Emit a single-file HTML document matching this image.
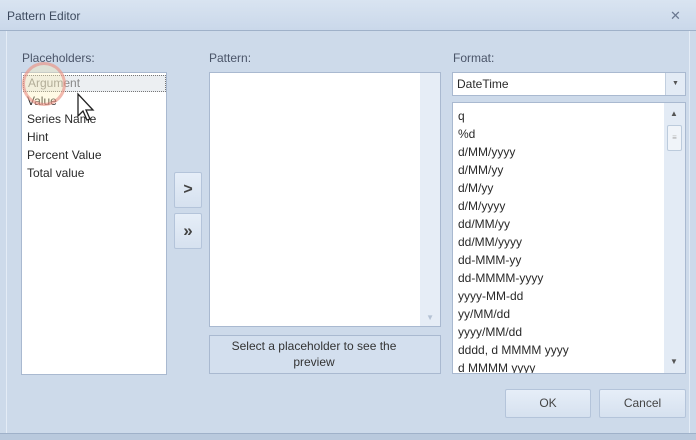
<!DOCTYPE html>
<html><head><style>
*{margin:0;padding:0;box-sizing:border-box}
body{width:696px;height:440px;background:#cddaea;font-family:"Liberation Sans",sans-serif;font-size:12px;color:#2a2a2a;position:relative;overflow:hidden}
.a{position:absolute}
.box{position:absolute;background:#fff;border:1px solid #a9b9d0}
.lbl{position:absolute;color:#4a5468;font-size:12px}
.it{height:18px;line-height:18px;padding-left:5px;white-space:nowrap}
.btn{position:absolute;background:linear-gradient(#e6eef8,#d6e1ef);border:1px solid #b4c4da;border-radius:2px;text-align:center;color:#444}
</style></head><body>
<div class="a" style="left:0;top:0;width:696px;height:31px;background:linear-gradient(#d9e4f1,#cad8ea);border-bottom:1px solid #9fb1c9"></div>
<div class="a" style="left:7px;top:9px;color:#3d4a5e;font-size:12px">Pattern Editor</div>
<div class="a" style="left:670px;top:8px;color:#6a7890;font-size:13px">✕</div>
<div class="a" style="left:6px;top:31px;width:684px;height:404px;border:1px solid #e4ecf6;border-top:none"></div>
<div class="a" style="left:0;top:433px;width:696px;height:7px;background:#b9c9dd;border-top:1px solid #9fb1c9"></div>

<div class="lbl" style="left:22px;top:51px">Placeholders:</div>
<div class="box" style="left:21px;top:72px;width:146px;height:303px;padding-top:2px">
<div class="it" style="background:#eceff2;border:1px dotted #777;color:#888;margin:0 0 0 1px;height:17px;line-height:15px;padding-left:4px">Argument</div>
<div class="it">Value</div><div class="it">Series Name</div><div class="it">Hint</div><div class="it">Percent Value</div><div class="it">Total value</div>
</div>
<div class="a" style="left:22px;top:62px;width:44px;height:44px;border-radius:50%;border:3px solid rgba(230,120,120,.5);background:rgba(255,240,180,.35)"></div>
<svg class="a" style="left:76px;top:92px" width="24" height="34"><path d="M2 2 L2 24 L7 19 L11 28 L14 27 L10 18 L17 18 Z" fill="#fff" stroke="#222" stroke-width="1.3"/></svg>

<div class="btn" style="left:174px;top:172px;width:28px;height:36px;line-height:34px;font-size:16px;font-weight:bold">&gt;</div>
<div class="btn" style="left:174px;top:213px;width:28px;height:36px;line-height:34px;font-size:17px;font-weight:bold">»</div>

<div class="lbl" style="left:209px;top:51px">Pattern:</div>
<div class="box" style="left:209px;top:72px;width:232px;height:255px">
<div class="a" style="right:0;top:0;width:20px;height:253px;background:#e6edf6"></div>
<div class="a" style="right:6px;top:240px;color:#b5c2d4;font-size:8px">▼</div>
</div>
<div class="a" style="left:209px;top:335px;width:232px;height:39px;border:1px solid #a9b9d0;background:#d3dfee;text-align:center;line-height:16px;padding:2px 22px 0 0;color:#333">Select a placeholder to see the preview</div>

<div class="lbl" style="left:453px;top:51px">Format:</div>
<div class="box" style="left:452px;top:72px;width:234px;height:24px;line-height:22px;padding-left:4px">DateTime
<div class="a" style="right:0;top:0;width:20px;height:22px;background:#e3ebf5;border-left:1px solid #c2cfdf;text-align:center;font-size:7px;color:#555">▼</div></div>
<div class="box" style="left:452px;top:102px;width:234px;height:272px;padding-top:4px;overflow:hidden">
<div class="it">q</div><div class="it">%d</div><div class="it">d/MM/yyyy</div><div class="it">d/MM/yy</div><div class="it">d/M/yy</div><div class="it">d/M/yyyy</div><div class="it">dd/MM/yy</div><div class="it">dd/MM/yyyy</div><div class="it">dd-MMM-yy</div><div class="it">dd-MMMM-yyyy</div><div class="it">yyyy-MM-dd</div><div class="it">yy/MM/dd</div><div class="it">yyyy/MM/dd</div><div class="it">dddd, d MMMM yyyy</div><div class="it">d MMMM yyyy</div>
<div class="a" style="right:0;top:0;width:21px;height:270px;background:#e3ebf5">
<div class="a" style="left:6px;top:6px;font-size:8px;color:#555">▲</div>
<div class="a" style="left:3px;top:22px;width:15px;height:26px;background:#f0f4f9;border:1px solid #bccbdc;border-radius:2px;text-align:center;font-size:8px;line-height:24px;color:#aaa">≡</div>
<div class="a" style="left:6px;top:254px;font-size:8px;color:#555">▼</div>
</div></div>

<div class="btn" style="left:505px;top:389px;width:86px;height:29px;line-height:27px">OK</div>
<div class="btn" style="left:599px;top:389px;width:87px;height:29px;line-height:27px">Cancel</div>
</body></html>
